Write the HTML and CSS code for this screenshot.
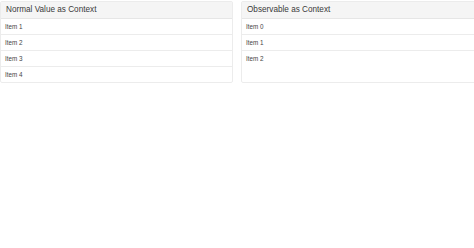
FILE: index.html
```html
<!DOCTYPE html>
<html lang="en">
<head>
  <meta charset="UTF-8">
  <title>Context Demo</title>
  <link rel="stylesheet" href="styles.css">
</head>
<body>
  <div class="row">
    <div class="panel">
      <div class="panel-heading">Normal Value as Context</div>
      <ul class="list-group">
        <li class="list-item">Item 1</li>
        <li class="list-item">Item 2</li>
        <li class="list-item">Item 3</li>
        <li class="list-item">Item 4</li>
      </ul>
    </div>
    <div class="panel">
      <div class="panel-heading">Observable as Context</div>
      <ul class="list-group">
        <li class="list-item">Item 0</li>
        <li class="list-item">Item 1</li>
        <li class="list-item">Item 2</li>
      </ul>
    </div>
  </div>
</body>
</html>
```

FILE: styles.css
```css
/* General Styles */
body {
  font-family: "Liberation Sans", Arial, sans-serif;
  background-color: #fff;
  color: #333;
  margin: 0;
  padding: 0;
  overflow: hidden;
}

/* Two columns, the right one runs past the window edge */
.row {
  display: grid;
  grid-template-columns: 233px 1fr;
  gap: 8px;
  padding-top: 1px;
  width: calc(100% + 3px);
}

/* Panels */
.panel {
  border: 1px solid #ececec;
  border-radius: 2px;
  background-color: #fff;
}

.panel-heading {
  background-color: #f5f5f5;
  border-bottom: 1px solid #e6e6e6;
  height: 16px;
  line-height: 16px;
  padding-left: 5px;
  font-size: 8.2px;
  color: #3a3a3a;
}

.list-group {
  list-style: none;
  margin: 0;
  padding: 0;
}

.list-item {
  height: 15px;
  line-height: 15px;
  padding-left: 4px;
  font-size: 6.3px;
  color: #444;
  border-top: 1px solid #ececec;
}

.list-item:first-child {
  border-top: none;
}
```
